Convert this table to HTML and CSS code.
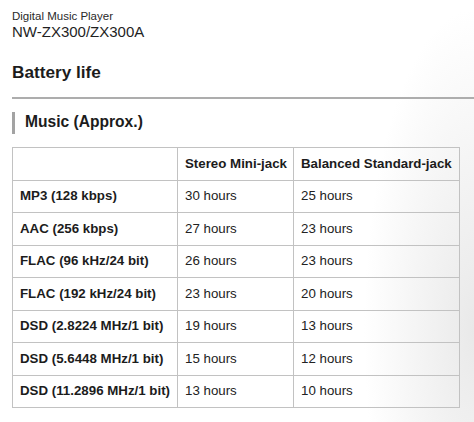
FILE: index.html
```html
<!DOCTYPE html>
<html lang="en">
<head>
<meta charset="utf-8">
<title>Battery life</title>
<link rel="stylesheet" href="styles.css">
</head>
<body>
<div class="page">
  <div class="series">Digital Music Player</div>
  <div class="model">NW-ZX300/ZX300A</div>
  <h1 class="title">Battery life</h1>
  <hr class="rule">
  <h2 class="section">Music (Approx.)</h2>
  <table class="spec">
    <colgroup>
      <col class="c1"><col class="c2"><col class="c3">
    </colgroup>
    <thead>
      <tr><th></th><th>Stereo Mini-jack</th><th>Balanced Standard-jack</th></tr>
    </thead>
    <tbody>
      <tr><th>MP3 (128 kbps)</th><td>30 hours</td><td>25 hours</td></tr>
      <tr><th>AAC (256 kbps)</th><td>27 hours</td><td>23 hours</td></tr>
      <tr><th>FLAC (96 kHz/24 bit)</th><td>26 hours</td><td>23 hours</td></tr>
      <tr><th>FLAC (192 kHz/24 bit)</th><td>23 hours</td><td>20 hours</td></tr>
      <tr><th>DSD (2.8224 MHz/1 bit)</th><td>19 hours</td><td>13 hours</td></tr>
      <tr><th>DSD (5.6448 MHz/1 bit)</th><td>15 hours</td><td>12 hours</td></tr>
      <tr><th>DSD (11.2896 MHz/1 bit)</th><td>13 hours</td><td>10 hours</td></tr>
    </tbody>
  </table>
</div>
</body>
</html>
```

FILE: styles.css
```css
html {
  background: #fff radial-gradient(ellipse 110px 320px at 100% 78%, #e9e9e9 0%, rgba(255,255,255,0) 100%) no-repeat;
  min-height: 100%;
}
body {
  margin: 0;
  font-family: "Liberation Sans", Arial, sans-serif;
  color: #1c1c1c;
}
.page {
  padding: 9px 0 0 12px;
}
.series {
  font-size: 11.5px;
  line-height: 14px;
  color: #2a2a2a;
}
.model {
  font-size: 15px;
  line-height: 18px;
  color: #1f1f1f;
}
.title {
  margin: 20px 0 0;
  font-size: 17.2px;
  line-height: 22px;
  font-weight: bold;
}
.rule {
  margin: 14px 0 0;
  border: 0;
  height: 2px;
  background: #adadad;
}
.section {
  margin: 13px 0 0;
  padding: 0 0 3px 10px;
  border-left: 3px solid #a3a3a3;
  font-size: 15.6px;
  line-height: 19px;
  font-weight: bold;
}
.spec {
  margin-top: 13px;
  width: 447px;
  border-collapse: collapse;
  table-layout: fixed;
  font-size: 13.3px;
}
.spec .c1 { width: 165px; }
.spec .c2 { width: 116px; }
.spec .c3 { width: 166px; }
.spec tr {
  height: 32.5px;
}
.spec th,
.spec td {
  border: 1px solid #c2c2c2;
  padding: 0 0 0 7px;
  text-align: left;
  vertical-align: middle;
  white-space: nowrap;
  line-height: 16px;
}
.spec th {
  font-weight: bold;
}
.spec td {
  font-weight: normal;
  color: #222;
}
```
